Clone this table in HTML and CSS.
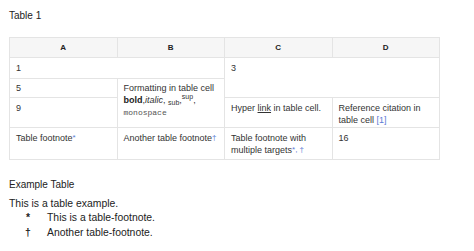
FILE: index.html
```html
<!DOCTYPE html>
<html>
<head>
<meta charset="utf-8">
<link rel="stylesheet" href="styles.css">
</head>
<body>
<div class="page">
  <div class="title">Table 1</div>
  <table class="tbl">
    <colgroup><col><col><col><col></colgroup>
    <thead>
      <tr class="hrow"><th>A</th><th>B</th><th>C</th><th>D</th></tr>
    </thead>
    <tbody>
      <tr class="r1"><td colspan="2">1</td><td colspan="2" rowspan="2">3</td></tr>
      <tr class="r2"><td>5</td><td rowspan="2" class="fmt">Formatting in table cell <b>bold</b>,<i>italic</i>, <sub>sub</sub>,<sup>sup</sup>, <code>monospace</code></td></tr>
      <tr class="r3"><td>9</td><td>Hyper <a class="lnk" href="#">link</a> in table cell.</td><td>Reference citation in table cell <span class="ref">[1]</span></td></tr>
      <tr class="r4"><td>Table footnote<span class="fn">*</span></td><td>Another table footnote<span class="fn">†</span></td><td>Table footnote with multiple targets<span class="fn">*, †</span></td><td>16</td></tr>
    </tbody>
  </table>
  <div class="caption">Example Table</div>
  <p class="desc">This is a table example.</p>
  <ul class="notes">
    <li><span class="mark">*</span><span>This is a table-footnote.</span></li>
    <li><span class="mark">†</span><span>Another table-footnote.</span></li>
  </ul>
</div>
</body>
</html>
```
FILE: styles.css
```css
html, body {
  margin: 0;
  padding: 0;
  background: #ffffff;
}
body {
  font-family: "Liberation Sans", Arial, sans-serif;
  color: #2b2b2b;
}
.page {
  padding: 9px 9px 0 9px;
}
.title {
  font-size: 10px;
  line-height: 14px;
  margin-bottom: 14px;
  color: #222;
}
.tbl {
  width: 431px;
  table-layout: fixed;
  border-collapse: collapse;
  font-size: 9px;
  line-height: 12px;
  color: #333;
}
.tbl col {
  width: 25%;
}
.tbl th, .tbl td {
  border: 1px solid #e4e4e4;
  padding: 4px 6px 3px 6px;
  text-align: left;
  vertical-align: top;
}
.tbl th {
  background: #f6f6f6;
  font-weight: bold;
  font-size: 8px;
  text-align: center;
  vertical-align: middle;
  padding: 0 6px;
  color: #222;
}
.hrow { height: 20px; }
.r1 { height: 21px; }
.r2 { height: 18px; }
.r2 td { padding-top: 3px; }
.r3 { height: 29px; }
.r3 td { padding-bottom: 1px; }
.r4 { height: 31px; }
.fmt {
  padding-top: 3px;
}
.fmt b { color: #222; }
.tbl sub, .tbl sup {
  font-size: 7px;
  line-height: 0;
  vertical-align: baseline;
  position: relative;
}
.tbl sub { top: 2px; }
.tbl sup { top: -4px; }
.tbl code {
  font-family: "Liberation Mono", "Courier New", monospace;
  font-size: 8px;
  color: #555;
}
.lnk {
  color: #333;
  text-decoration: underline;
}
.ref {
  color: #5b7bd5;
}
.fn {
  color: #5b7bd5;
  font-size: 8px;
  line-height: 0;
  vertical-align: baseline;
  position: relative;
  top: -1px;
}
.caption {
  font-size: 10px;
  line-height: 14px;
  margin-top: 18px;
  color: #222;
}
.desc {
  margin: 5px 0 0 0;
  font-size: 10.4px;
  line-height: 13px;
  color: #222;
}
.notes {
  list-style: none;
  margin: 0;
  padding: 0;
  font-size: 10.4px;
  line-height: 15px;
  color: #222;
}
.notes li {
  display: flex;
}
.mark {
  width: 38px;
  text-align: center;
  font-weight: bold;
}
```
